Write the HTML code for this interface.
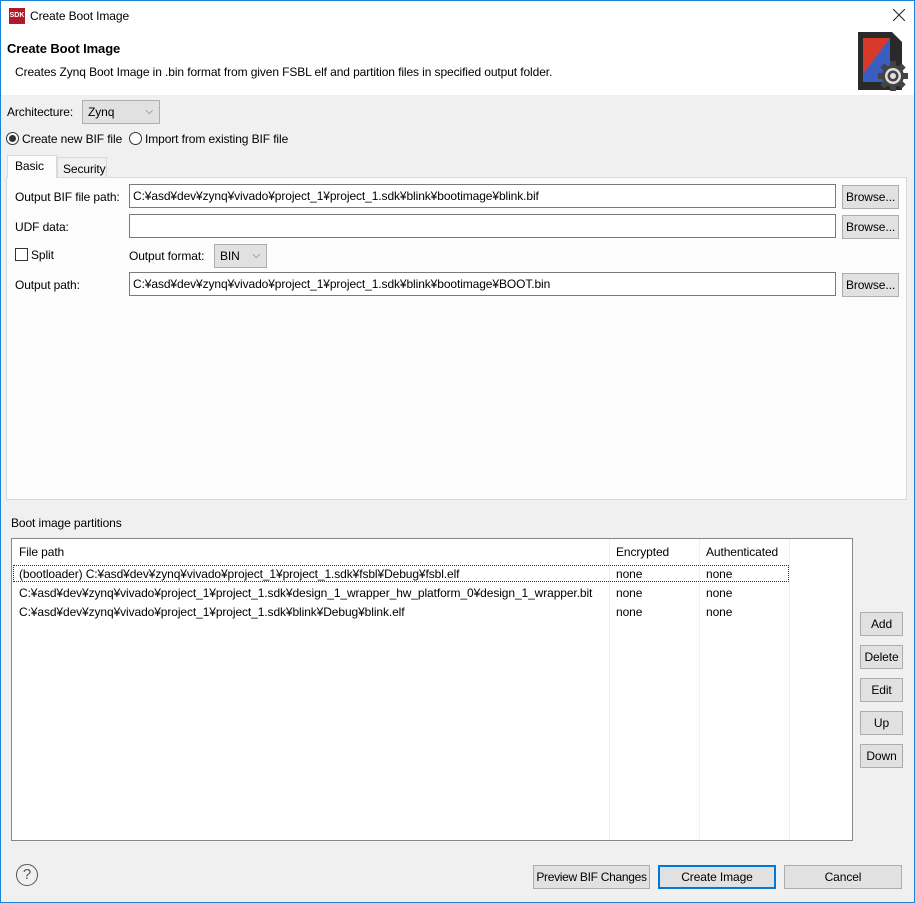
<!DOCTYPE html>
<html><head><meta charset="utf-8"><style>
*{box-sizing:border-box;margin:0;padding:0}
body{width:915px;height:903px;overflow:hidden;background:#f0f0f0;font-family:"Liberation Sans","Noto Sans CJK JP",sans-serif;font-size:12px;letter-spacing:-0.1px;color:#000;position:relative}
.a{position:absolute;white-space:nowrap}
.win{position:absolute;left:0;top:0;width:915px;height:903px;border:1px solid #1883d7;pointer-events:none}
.in{position:absolute;background:#fff;border:1px solid #7a7a7a;height:24px;padding:4px 3px;white-space:nowrap;overflow:hidden}
.btn{position:absolute;background:#e1e1e1;border:1px solid #adadad;text-align:center;height:24px;line-height:22px;white-space:nowrap}
.sel{position:absolute;background:#e1e1e1;border:1px solid #adadad;height:24px;line-height:22px;padding-left:5px}
.chev{position:absolute;right:6px;top:0;font-size:10px;color:#555}
</style></head><body>
<div class="a" style="left:0;top:0;width:915px;height:95px;background:#fff"></div>
<div class="a" style="left:9px;top:8px;width:16px;height:16px;background:#b0182b;color:#fff;font-size:7px;font-weight:bold;line-height:16px;text-align:center;letter-spacing:0">SDK</div>
<div class="a" style="left:30px;top:9px">Create Boot Image</div>
<svg class="a" style="left:893px;top:9px" width="12" height="12"><path d="M0 0L12 12M12 0L0 12" stroke="#222" stroke-width="1"/></svg>
<div class="a" style="left:7px;top:41px;font-weight:bold;font-size:13px">Create Boot Image</div>
<div class="a" style="left:15px;top:65px">Creates Zynq Boot Image in .bin format from given FSBL elf and partition files in specified output folder.</div>
<svg class="a" style="left:855px;top:30px" width="58" height="64" viewBox="0 0 58 64">
<path d="M3 2h34l10 10v48H3z" fill="#2a2a2a"/>
<path d="M8 8h27v44H8z" fill="#3a5dc0"/><path d="M8 8h27L8 44z" fill="#d83a2a"/>
<g transform="translate(38,46)" fill="#444">
<circle r="11"/>
<rect x="-3" y="-15" width="6" height="30"/><rect x="-15" y="-3" width="30" height="6"/>
<rect x="-3" y="-15" width="6" height="30" transform="rotate(45)"/><rect x="-3" y="-15" width="6" height="30" transform="rotate(-45)"/>
<circle r="8" fill="#e0e0e0"/><circle r="5.5" fill="#444"/><circle r="3" fill="#e0e0e0"/>
</g>
</svg>
<div class="a" style="left:7px;top:105px">Architecture:</div>
<div class="sel" style="left:82px;top:100px;width:78px">Zynq<span class="chev">⌵</span></div>
<div class="a" style="left:6px;top:132px;width:13px;height:13px;border:1px solid #333;border-radius:50%;background:#fff"><div style="margin:2px;width:7px;height:7px;border-radius:50%;background:#333"></div></div>
<div class="a" style="left:22px;top:132px">Create new BIF file</div>
<div class="a" style="left:129px;top:132px;width:13px;height:13px;border:1px solid #333;border-radius:50%;background:#fff"></div>
<div class="a" style="left:145px;top:132px">Import from existing BIF file</div>
<div class="a" style="left:6px;top:177px;width:901px;height:323px;background:#fcfcfc;border:1px solid #d9d9d9"></div>
<div class="a" style="left:57px;top:157px;width:50px;height:21px;border:1px solid #d9d9d9;background:#f0f0f0;padding:4px 0 0 5px">Security</div>
<div class="a" style="left:7px;top:155px;width:50px;height:23px;border:1px solid #d9d9d9;border-bottom:none;background:#fcfcfc;padding:3px 0 0 7px">Basic</div>
<div class="a" style="left:15px;top:190px">Output BIF file path:</div>
<div class="in" style="left:129px;top:184px;width:707px">C:¥asd¥dev¥zynq¥vivado¥project_1¥project_1.sdk¥blink¥bootimage¥blink.bif</div>
<div class="btn" style="left:842px;top:185px;width:57px">Browse...</div>
<div class="a" style="left:15px;top:220px">UDF data:</div>
<div class="in" style="left:129px;top:214px;width:707px"></div>
<div class="btn" style="left:842px;top:215px;width:57px">Browse...</div>
<div class="a" style="left:15px;top:248px;width:13px;height:13px;border:1px solid #333;background:#fff"></div>
<div class="a" style="left:31px;top:248px">Split</div>
<div class="a" style="left:129px;top:249px">Output format:</div>
<div class="sel" style="left:214px;top:244px;width:53px">BIN<span class="chev">⌵</span></div>
<div class="a" style="left:15px;top:278px">Output path:</div>
<div class="in" style="left:129px;top:272px;width:707px">C:¥asd¥dev¥zynq¥vivado¥project_1¥project_1.sdk¥blink¥bootimage¥BOOT.bin</div>
<div class="btn" style="left:842px;top:273px;width:57px">Browse...</div>
<div class="a" style="left:11px;top:516px">Boot image partitions</div>
<div class="a" style="left:11px;top:538px;width:842px;height:303px;background:#fff;border:1px solid #828790"></div>
<div class="a" style="left:609px;top:539px;width:1px;height:301px;background:#f0f0f0"></div>
<div class="a" style="left:699px;top:539px;width:1px;height:301px;background:#f0f0f0"></div>
<div class="a" style="left:789px;top:539px;width:1px;height:301px;background:#f0f0f0"></div>
<div class="a" style="left:19px;top:545px">File path</div>
<div class="a" style="left:616px;top:545px">Encrypted</div>
<div class="a" style="left:706px;top:545px">Authenticated</div>
<div class="a" style="left:13px;top:565px;width:776px;height:17px;border:1px dotted #333"></div>
<div class="a" style="left:19px;top:567px">(bootloader) C:¥asd¥dev¥zynq¥vivado¥project_1¥project_1.sdk¥fsbl¥Debug¥fsbl.elf</div>
<div class="a" style="left:19px;top:586px">C:¥asd¥dev¥zynq¥vivado¥project_1¥project_1.sdk¥design_1_wrapper_hw_platform_0¥design_1_wrapper.bit</div>
<div class="a" style="left:19px;top:605px">C:¥asd¥dev¥zynq¥vivado¥project_1¥project_1.sdk¥blink¥Debug¥blink.elf</div>
<div class="a" style="left:616px;top:567px">none</div><div class="a" style="left:706px;top:567px">none</div>
<div class="a" style="left:616px;top:586px">none</div><div class="a" style="left:706px;top:586px">none</div>
<div class="a" style="left:616px;top:605px">none</div><div class="a" style="left:706px;top:605px">none</div>
<div class="btn" style="left:860px;top:612px;width:43px">Add</div>
<div class="btn" style="left:860px;top:645px;width:43px">Delete</div>
<div class="btn" style="left:860px;top:678px;width:43px">Edit</div>
<div class="btn" style="left:860px;top:711px;width:43px">Up</div>
<div class="btn" style="left:860px;top:744px;width:43px">Down</div>
<div class="a" style="left:16px;top:864px;width:22px;height:22px;border:1px solid #555;border-radius:50%;text-align:center;line-height:20px;font-size:15px;color:#555">?</div>
<div class="btn" style="left:533px;top:865px;width:117px;letter-spacing:-0.3px">Preview BIF Changes</div>
<div class="btn" style="left:658px;top:865px;width:118px;border:2px solid #0078d7;line-height:20px">Create Image</div>
<div class="btn" style="left:784px;top:865px;width:118px">Cancel</div>
<div class="win"></div>
</body></html>
